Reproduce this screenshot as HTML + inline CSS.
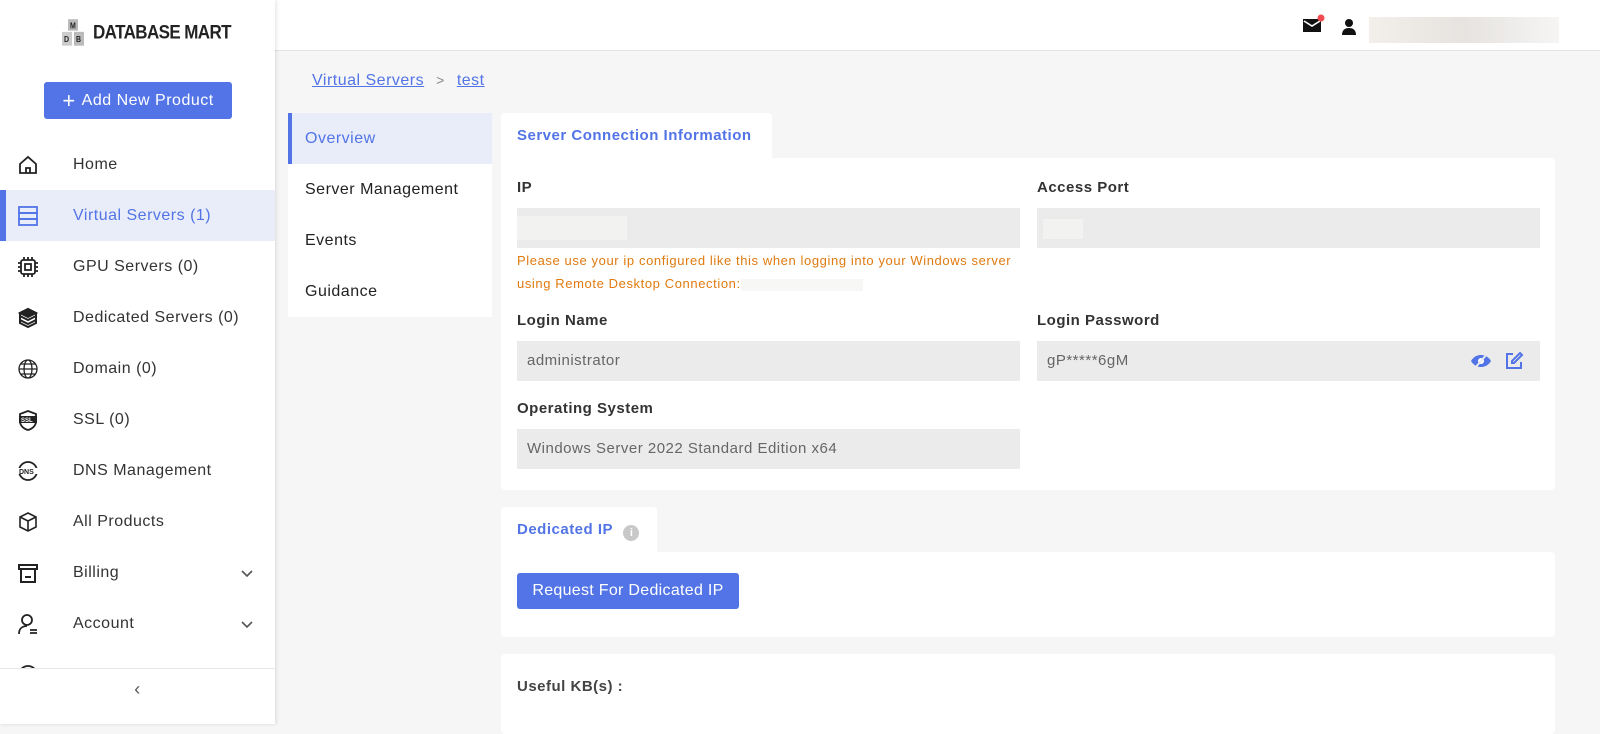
<!DOCTYPE html>
<html><head><meta charset="utf-8"><style>
*{box-sizing:border-box;margin:0;padding:0}
body{width:1600px;height:724px;overflow:hidden;background:#f6f6f6;font-family:"Liberation Sans",sans-serif;color:#222;position:relative;letter-spacing:.5px}
.side{position:absolute;left:0;top:0;width:275px;height:724px;background:#fff;box-shadow:1px 0 4px rgba(0,0,0,.12);z-index:2}
.logo{position:absolute;left:58px;top:20px;display:flex;align-items:center;gap:3px;font-weight:bold;font-size:17px;letter-spacing:-.6px;color:#222;transform:scaleY(1.15)}
.addbtn{position:absolute;left:44px;top:82px;width:188px;height:37px;background:#5274e6;border-radius:3px;color:#fff;font-size:16px;display:flex;align-items:center;justify-content:center;gap:6px}
.nav{position:absolute;left:0;top:139px;width:275px}
.nav div{height:51px;display:flex;align-items:center;font-size:16px;color:#333;position:relative}
.nav div svg{position:absolute;left:17px}
.nav div span{position:absolute;left:73px}
.nav .act{background:#e9edf9;color:#5274e6}
.nav .act:before{content:"";position:absolute;left:0;top:0;bottom:0;width:6px;background:#5274e6}
.chev{position:absolute;left:240px!important}
.sfoot{position:absolute;left:0;top:668px;width:275px;height:56px;border-top:1px solid #e6e6e6;background:#fff;text-align:center;font-size:18px;color:#555;padding-top:10px}
.top{position:absolute;left:275px;top:0;right:0;height:51px;background:#fff;border-bottom:1px solid #e3e3e3}
.crumb{position:absolute;left:312px;top:72px;font-size:16px;color:#5274e6}
.crumb a{color:#5274e6;text-decoration:underline}
.menu{position:absolute;left:288px;top:113px;width:204px;background:#fff}
.menu div{height:51px;padding-left:17px;display:flex;align-items:center;font-size:16px;color:#222}
.menu .act{background:#e9edf9;color:#5274e6;border-left:4px solid #5274e6;padding-left:13px}
.tab{position:absolute;background:#fff;border-radius:4px 4px 0 0;color:#5274e6;font-weight:bold;font-size:15px;padding:14px 16px}
.card{position:absolute;left:501px;width:1054px;background:#fff;border-radius:0 4px 4px 4px}
.lbl{position:absolute;font-weight:bold;font-size:15px;color:#333}
.inp{position:absolute;height:40px;background:#ebebeb;font-size:15px;color:#666;padding:11px 10px}
.warn{position:absolute;left:16px;font-size:13px;color:#e07a10;letter-spacing:.6px}
</style></head><body>
<div class="side">
 <div class="logo"><svg width="32" height="26" viewBox="0 0 30 26"><rect x="9" y="1" width="10" height="10" fill="#bbb"/><rect x="3" y="12" width="10" height="12" fill="#ccc"/><rect x="15" y="12" width="10" height="12" fill="#bbb"/><text x="11" y="9" font-size="7" fill="#222">M</text><text x="5" y="21" font-size="7" fill="#222">D</text><text x="17" y="21" font-size="7" fill="#222">B</text></svg><span>DATABASE MART</span></div>
 <div class="addbtn"><span style="font-size:22px;line-height:1">+</span>Add New Product</div>
 <div class="nav">
  <div><svg width="22" height="22" viewBox="0 0 22 22" fill="none" stroke="#222" stroke-width="1.8"><path d="M3 10L11 3l8 7v9H3z M9 19v-5h4v5"/></svg><span>Home</span></div>
  <div class="act"><svg width="22" height="22" viewBox="0 0 22 22" fill="none" stroke="#5274e6" stroke-width="1.8"><rect x="2" y="2" width="18" height="6"/><rect x="2" y="8" width="18" height="6"/><rect x="2" y="14" width="18" height="6"/></svg><span>Virtual Servers (1)</span></div>
  <div><svg width="22" height="22" viewBox="0 0 22 22" fill="none" stroke="#222" stroke-width="1.8"><rect x="4" y="4" width="14" height="14" rx="2"/><rect x="8" y="8" width="6" height="6"/><path d="M7 1v3M11 1v3M15 1v3M7 18v3M11 18v3M15 18v3M1 7h3M1 11h3M1 15h3M18 7h3M18 11h3M18 15h3"/></svg><span>GPU Servers (0)</span></div>
  <div><svg width="22" height="22" viewBox="0 0 22 22" fill="none" stroke="#222" stroke-width="2"><path d="M11 2l8 4v10l-8 4-8-4V6z M3 9l8 4 8-4 M3 13l8 4 8-4"/><path d="M11 2l8 4-8 4-8-4z" fill="#222"/></svg><span>Dedicated Servers (0)</span></div>
  <div><svg width="22" height="22" viewBox="0 0 22 22" fill="none" stroke="#222" stroke-width="1.3"><circle cx="11" cy="11" r="9"/><ellipse cx="11" cy="11" rx="4" ry="9"/><path d="M2 11h18M4 6h14M4 16h14"/></svg><span>Domain (0)</span></div>
  <div><svg width="22" height="22" viewBox="0 0 22 22"><path d="M11 2l8 3v7c0 5-4 8-8 9-4-1-8-4-8-9V5z" fill="#fff" stroke="#222" stroke-width="1.8"/><rect x="2" y="7" width="18" height="7" fill="#222"/><text x="4" y="13" font-size="6" fill="#fff" font-weight="bold" letter-spacing="0">SSL</text></svg><span>SSL (0)</span></div>
  <div><svg width="22" height="22" viewBox="0 0 22 22"><circle cx="11" cy="11" r="9" fill="none" stroke="#222" stroke-width="1.8"/><rect x="1" y="8" width="20" height="6" fill="#fff"/><text x="2" y="14" font-size="7" font-weight="bold" fill="#222" letter-spacing="0">DNS</text></svg><span>DNS Management</span></div>
  <div><svg width="22" height="22" viewBox="0 0 22 22" fill="none" stroke="#222" stroke-width="1.6"><path d="M11 2l8 4v10l-8 4-8-4V6z M3 6l8 4 8-4 M11 10v10"/></svg><span>All Products</span></div>
  <div><svg width="22" height="22" viewBox="0 0 22 22" fill="none" stroke="#222" stroke-width="2"><path d="M2 3h18v4H2z M4 7v13h14V7 M8 15h6"/></svg><span>Billing</span><svg class="chev" width="14" height="10" viewBox="0 0 14 10" fill="none" stroke="#555" stroke-width="1.6"><path d="M2 3l5 5 5-5"/></svg></div>
  <div><svg width="22" height="22" viewBox="0 0 22 22" fill="none" stroke="#222" stroke-width="1.8"><circle cx="10" cy="7" r="5"/><path d="M2 21c0-5 3-8 8-8 M13 17h7M13 20h7"/></svg><span>Account</span><svg class="chev" width="14" height="10" viewBox="0 0 14 10" fill="none" stroke="#555" stroke-width="1.6"><path d="M2 3l5 5 5-5"/></svg></div>
  <div><svg width="22" height="22" viewBox="0 0 22 22" fill="none" stroke="#222" stroke-width="1.8"><circle cx="11" cy="11" r="9"/></svg><span>Support</span></div>
 </div>
 <div class="sfoot">‹</div>
</div>
<div class="top">
 <svg style="position:absolute;left:1028px;top:14px" width="22" height="20" viewBox="0 0 22 20"><rect x="0" y="5" width="18" height="13" fill="#111"/><path d="M1 7l8 5 8-5" fill="none" stroke="#fff" stroke-width="1.6"/><circle cx="18" cy="4" r="3.5" fill="#f04b50"/></svg>
 <svg style="position:absolute;left:1066px;top:18px" width="16" height="17" viewBox="0 0 16 17"><circle cx="8" cy="5" r="4" fill="#111"/><path d="M1 17c0-5 3-7 7-7s7 2 7 7z" fill="#111"/></svg>
 <div style="position:absolute;left:1094px;top:17px;width:190px;height:26px;background:linear-gradient(90deg,#f3efea,#e6e3e0,#f6f5f4)"></div>
</div>
<div class="crumb"><a>Virtual Servers</a><span style="color:#888;margin:0 12px;font-size:14px">&gt;</span><a>test</a></div>
<div class="menu"><div class="act">Overview</div><div>Server Management</div><div>Events</div><div>Guidance</div></div>
<div class="tab" style="left:501px;top:113px;width:271px;height:46px">Server Connection Information</div>
<div class="card" style="top:158px;height:332px">
 <div class="lbl" style="left:16px;top:21px">IP</div>
 <div class="inp" style="left:16px;top:50px;width:503px"><div style="width:110px;height:24px;background:#f2f2f1;margin:-3px 0 0 -10px"></div></div>
 <div class="warn" style="top:95px">Please use your ip configured like this when logging into your Windows server</div>
 <div class="warn" style="top:118px">using Remote Desktop Connection:<span style="display:inline-block;width:122px;height:12px;background:#f7f7f6;vertical-align:middle"></span></div>
 <div class="lbl" style="left:536px;top:21px">Access Port</div>
 <div class="inp" style="left:536px;top:50px;width:503px"><div style="width:40px;height:20px;background:#f2f2f1;margin:0 0 0 -4px"></div></div>
 <div class="lbl" style="left:16px;top:154px">Login Name</div>
 <div class="inp" style="left:16px;top:183px;width:503px">administrator</div>
 <div class="lbl" style="left:536px;top:154px">Login Password</div>
 <div class="inp" style="left:536px;top:183px;width:503px">gP*****6gM
  <svg style="position:absolute;left:433px;top:12px" width="22" height="16" viewBox="0 0 22 16"><path d="M1 8c3-5 7-6 10-6s7 1 10 6c-3 5-7 6-10 6S4 13 1 8z" fill="#5274e6"/><circle cx="11" cy="8" r="3" fill="#fff"/><path d="M5 15L17 1" stroke="#ebebeb" stroke-width="2"/></svg>
  <svg style="position:absolute;left:467px;top:10px" width="20" height="20" viewBox="0 0 20 20" fill="none" stroke="#5274e6" stroke-width="2"><path d="M9 3H3v14h14v-6"/><path d="M16 2l2 2-8 8H8v-2z"/></svg>
 </div>
 <div class="lbl" style="left:16px;top:242px">Operating System</div>
 <div class="inp" style="left:16px;top:271px;width:503px">Windows Server 2022 Standard Edition x64</div>
</div>
<div class="tab" style="left:501px;top:507px;width:156px;height:46px">Dedicated IP <span style="display:inline-block;width:16px;height:16px;border-radius:50%;background:#c8c8c8;color:#fff;font-size:11px;text-align:center;line-height:16px;margin-left:6px;vertical-align:-2px;letter-spacing:0">i</span></div>
<div class="card" style="top:552px;height:85px"><div style="position:absolute;left:16px;top:21px;width:222px;height:36px;background:#5274e6;border-radius:3px;color:#fff;font-size:16px;display:flex;align-items:center;justify-content:center;letter-spacing:.3px">Request For Dedicated IP</div></div>
<div class="card" style="top:654px;height:80px;border-radius:4px"><div class="lbl" style="left:16px;top:24px;color:#444">Useful KB(s) :</div></div>
</body></html>
